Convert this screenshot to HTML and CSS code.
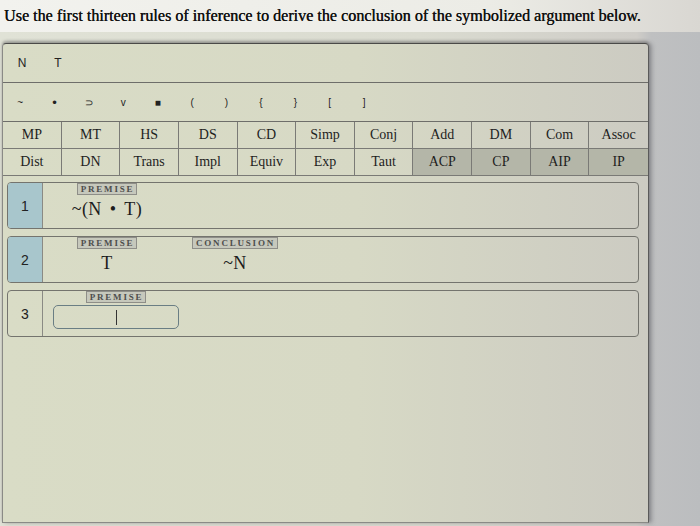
FILE: index.html
```html
<!DOCTYPE html>
<html>
<head>
    <title>Rules of Inference</title>
    <link rel="stylesheet" href="styles.css">
</head>
<body>
    <div class="question">Use the first thirteen rules of inference to derive the conclusion of the symbolized argument below.</div>

    <div class="panel">
        <div class="vars">
            <span class="key">N</span>
            <span class="key">T</span>
        </div>

        <div class="symbols">
            <span class="sym">~</span>
            <span class="sym dot">&bull;</span>
            <span class="sym">&sup;</span>
            <span class="sym">v</span>
            <span class="sym">&#9632;</span>
            <span class="sym">(</span>
            <span class="sym">)</span>
            <span class="sym">{</span>
            <span class="sym">}</span>
            <span class="sym">[</span>
            <span class="sym">]</span>
        </div>

        <div class="rules">
            <div class="rule">MP</div>
            <div class="rule">MT</div>
            <div class="rule">HS</div>
            <div class="rule">DS</div>
            <div class="rule">CD</div>
            <div class="rule">Simp</div>
            <div class="rule">Conj</div>
            <div class="rule">Add</div>
            <div class="rule">DM</div>
            <div class="rule">Com</div>
            <div class="rule">Assoc</div>
            <div class="rule">Dist</div>
            <div class="rule">DN</div>
            <div class="rule">Trans</div>
            <div class="rule">Impl</div>
            <div class="rule">Equiv</div>
            <div class="rule">Exp</div>
            <div class="rule">Taut</div>
            <div class="rule off">ACP</div>
            <div class="rule off">CP</div>
            <div class="rule off">AIP</div>
            <div class="rule off">IP</div>
        </div>

        <div class="proof">
            <div class="line given">
                <div class="num">1</div>
                <div class="body">
                    <div class="slot">
                        <span class="tag">Premise</span>
                        <span class="wff">~(N &bull; T)</span>
                    </div>
                </div>
            </div>
            <div class="line given">
                <div class="num">2</div>
                <div class="body">
                    <div class="slot">
                        <span class="tag">Premise</span>
                        <span class="wff">T</span>
                    </div>
                    <div class="slot">
                        <span class="tag">Conclusion</span>
                        <span class="wff">~N</span>
                    </div>
                </div>
            </div>
            <div class="line">
                <div class="num">3</div>
                <div class="body">
                    <div class="slot">
                        <span class="tag">Premise</span>
                        <div class="entry"><span class="caret"></span></div>
                    </div>
                </div>
            </div>
        </div>
    </div>
</body>
</html>
```

FILE: styles.css
```css
body {
    margin: 0;
    padding: 0;
    height: 526px;
    overflow: hidden;
    font-family: 'Liberation Serif', serif;
    color: #1c1c1c;
    background: linear-gradient(90deg, #e0e2d6 0%, #dadbd0 60%, #cfcdc8 91%, #bfc0c1 93%, #bbbdbf 100%);
}

.question {
    height: 32px;
    padding-left: 4px;
    font-size: 16.1px;
    line-height: 32px;
    color: #111;
    text-shadow: 0.3px 0 0 #111;
    background: linear-gradient(90deg, #f2f2ee 0%, #ecece6 70%, #d9d7d2 100%);
}

.panel {
    margin: 11px 0 0 2px;
    width: 645px;
    height: 478px;
    border: 1px solid #8a8a86;
    border-top-color: #4a4a48;
    border-right-color: #5a5a5a;
    border-radius: 4px 4px 0 0;
    background: linear-gradient(90deg, #d9dcc6 0%, #d7d9c5 55%, #cccbc2 100%);
    box-shadow: 0 -2px 3px rgba(60, 60, 60, 0.35), 3px 0 4px rgba(60, 60, 70, 0.35);
}

.vars {
    display: flex;
    align-items: center;
    height: 38px;
    padding-left: 1px;
    border-bottom: 1px solid #6e6e6a;
    font-family: 'Liberation Sans', sans-serif;
    font-size: 12px;
    color: #222;
}

.key {
    width: 36px;
    text-align: center;
}

.symbols {
    display: flex;
    align-items: center;
    height: 38px;
    font-family: 'Liberation Sans', sans-serif;
    font-size: 10px;
    color: #222;
}

.sym {
    width: 34.4px;
    text-align: center;
}

.sym.dot {
    font-size: 13px;
}

.rules {
    display: grid;
    grid-template-columns: repeat(11, 1fr);
    border-top: 1px solid #6e6e6a;
}

.rule {
    height: 26px;
    display: flex;
    align-items: center;
    justify-content: center;
    font-size: 14px;
    color: #1e1e1e;
    border-right: 1px solid #7a7a76;
    border-bottom: 1px solid #7a7a76;
}

.rule:nth-child(11n) {
    border-right: none;
}

.rule.off {
    background: #b4b6a8;
}

.proof {
    display: flex;
    flex-direction: column;
    gap: 7px;
    padding: 6px 9px 0 4px;
}

.line {
    display: flex;
    height: 45px;
    border: 1px solid #74746e;
    border-radius: 4px;
    overflow: hidden;
}

.num {
    width: 34px;
    display: flex;
    align-items: center;
    justify-content: center;
    border-right: 1px solid #8a8a84;
    font-family: 'Liberation Sans', sans-serif;
    font-size: 14px;
    color: #222;
}

.given .num {
    background: #a8c6cc;
}

.body {
    display: flex;
    gap: 20px;
    padding-left: 10px;
}

.slot {
    min-width: 108px;
    display: flex;
    flex-direction: column;
    align-items: center;
}

.tag {
    padding: 0 2px 0 3px;
    height: 10px;
    line-height: 10px;
    font-size: 9px;
    font-weight: bold;
    text-transform: uppercase;
    letter-spacing: 1.8px;
    color: #4e4e4c;
    background: #c6c8bc;
    border: 1px solid #8e8e88;
}

.wff {
    margin-top: 4px;
    font-size: 18px;
    line-height: 20px;
    word-spacing: 3px;
    letter-spacing: 0.5px;
    color: #1c1c1c;
    white-space: pre;
}

.entry {
    margin-top: 2px;
    width: 124px;
    height: 22px;
    border: 1.5px solid #6a7e84;
    border-radius: 5px;
    display: flex;
    align-items: center;
    justify-content: center;
}

.caret {
    width: 1px;
    height: 15px;
    background: #333;
}
```
